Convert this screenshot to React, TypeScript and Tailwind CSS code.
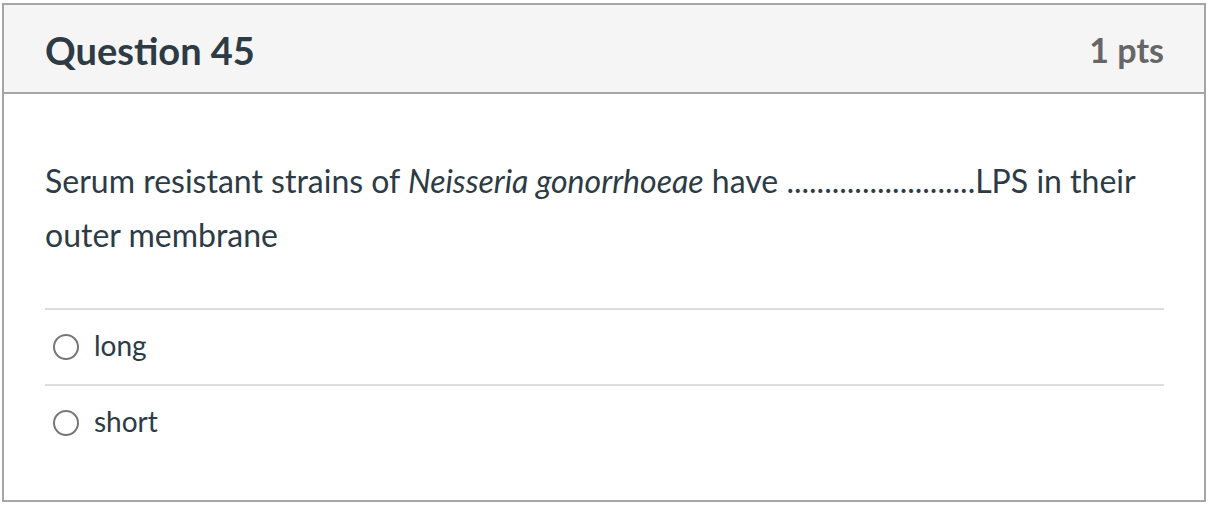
export default function App() {
  const answers = ["long", "short"];

  return (
    <div className="min-h-screen bg-white pt-[3px] pl-[2px] font-['Lato','Noto_Sans',sans-serif]">
      <div className="w-[1204px] h-[499px] border-2 border-[#a6a6a6] bg-white flex flex-col">
        <div className="h-[89px] shrink-0 bg-[#f5f5f5] border-b-2 border-[#a6a6a6] flex items-center justify-between pl-[41px] pr-[40px]">
          <h2 className="text-[38px] font-bold text-[#2d3b45] leading-none pt-[2px]">Question 45</h2>
          <span className="text-[34px] font-bold text-[#666666] leading-none pt-[2px]">1 pts</span>
        </div>

        <div className="pr-[40px] pl-[41px] pt-[60px]">
          <p className="text-[32px] leading-[54px] text-[#2d3b45]">
            Serum resistant strains of <em>Neisseria gonorrhoeae</em> have .........................LPS in their outer membrane
          </p>

          <div className="mt-[46px]">
            {answers.map((a) => (
              <label key={a} className="flex items-center h-[76px] border-t-2 border-[#dddddd] pl-[8px] cursor-pointer">
                <span className="w-[26px] h-[26px] rounded-full border-2 border-[#777777] bg-white shrink-0" />
                <span className="ml-[15px] text-[28px] text-[#2d3b45] leading-none pb-[4px]">{a}</span>
              </label>
            ))}
          </div>
        </div>
      </div>
    </div>
  );
}
